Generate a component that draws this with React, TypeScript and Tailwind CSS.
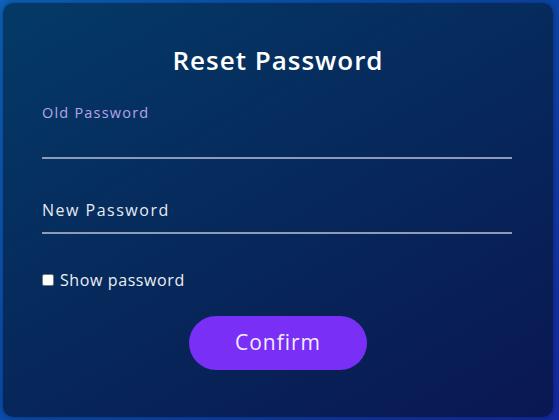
export default function App() {
  return (
    <div className="w-[559px] h-[420px] p-[3px] bg-[linear-gradient(135deg,#0d63bd_0%,#0b46a8_55%,#1429a0_100%)] font-['Open_Sans',sans-serif]">
      <div className="h-[414px] w-[550px] rounded-[10px] bg-[linear-gradient(150deg,#043a66_0%,#062a5c_45%,#0a1752_100%)] shadow-[0_0_6px_rgba(0,0,0,0.35)] px-[39px] pt-[40px] flex flex-col">
        <h1 className="text-center text-[26px] leading-[34px] font-semibold text-white tracking-[1px]">
          Reset Password
        </h1>

        <div className="mt-[27px] flex flex-col">
          <label className="text-[14.5px] leading-[18px] text-[#b9a3ea] tracking-[1.2px]">
            Old Password
          </label>
          <div className="mt-[35px] h-[2px] w-[470px] bg-[#8d9bb8]" />
        </div>

        <div className="mt-[41px] flex flex-col">
          <span className="text-[16px] leading-[20px] text-[#e8eaf2] tracking-[1.5px]">
            New Password
          </span>
          <div className="mt-[12px] h-[2px] w-[470px] bg-[#8d9bb8]" />
        </div>

        <label className="mt-[36px] flex items-center gap-[6px]">
          <span className="w-[12px] h-[12px] rounded-[2px] bg-white border border-[#767676]" />
          <span className="text-[16px] leading-[20px] text-[#eceef5] tracking-[0.6px]">
            Show password
          </span>
        </label>

        <div className="mt-[26px] flex justify-center">
          <button className="w-[178px] h-[54px] rounded-full bg-[#7a2ff6] text-[21px] text-[#f1ecff] tracking-[1px]">
            Confirm
          </button>
        </div>
      </div>
    </div>
  );
}
